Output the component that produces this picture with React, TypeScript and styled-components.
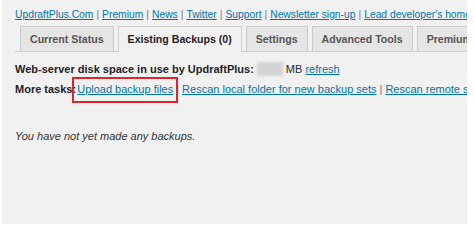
import * as React from "react";
import styled, { createGlobalStyle } from "styled-components";

const GlobalStyle = createGlobalStyle`
  html, body {
    margin: 0;
    padding: 0;
    background: #ffffff;
  }
  body {
    font-family: "Liberation Sans", Arial, sans-serif;
    color: #23282d;
  }
`;

const LIEN = "#0073aa";

const Page = styled.div`
  margin-left: 2px;
  width: 465px;
  height: 224px;
  box-sizing: border-box;
  padding-left: 13px;
  background: #f1f1f1;
  overflow: hidden;
`;

const BarreLiens = styled.div`
  padding-top: 8px;
  font-size: 10.3px;
  line-height: 13px;
  white-space: nowrap;
  color: #666;
`;

const Lien = styled.a`
  color: ${LIEN};
  text-decoration: underline;
  cursor: pointer;
`;

const Separateur = styled.span`
  color: #777;
  margin: 0 3px;
`;

const BarreOnglets = styled.div`
  display: flex;
  gap: 4px;
  margin-top: 5px;
  padding-left: 5px;
  border-bottom: 1px solid #ccc;
  white-space: nowrap;
`;

const Onglet = styled.div<{ $actif?: boolean }>`
  flex: none;
  height: 24px;
  line-height: 25px;
  padding: 0 9px;
  margin-bottom: -1px;
  font-size: 10.6px;
  font-weight: 700;
  border: 1px solid #ccc;
  border-bottom-color: ${(p) => (p.$actif ? "#f1f1f1" : "#ccc")};
  background: ${(p) => (p.$actif ? "#f1f1f1" : "#e5e5e5")};
  color: ${(p) => (p.$actif ? "#1d2327" : "#555")};
`;

const Contenu = styled.div`
  margin-top: 7px;
  font-size: 11px;
  line-height: 20px;
  white-space: nowrap;
`;

const Ligne = styled.div`
  color: #23282d;
`;

const Etiquette = styled.strong`
  font-weight: 700;
  color: #1d2327;
`;

const Flou = styled.span`
  display: inline-block;
  width: 26px;
  height: 14px;
  margin: 0 3px 0 3px;
  vertical-align: -3px;
  background: #d4d4d4;
  filter: blur(1.5px);
`;

const Encadre = styled.span`
  position: relative;
  display: inline-block;
  margin-left: -2px;
  line-height: 20px;
  &::after {
    content: "";
    position: absolute;
    left: -5px;
    right: -5px;
    top: -2px;
    bottom: -4px;
    border: 2px solid #e2232b;
  }
`;

const Vide = styled.div`
  margin-top: 27px;
  font-size: 11px;
  line-height: 20px;
  font-style: italic;
  color: #333;
`;

const liens = [
  "UpdraftPlus.Com",
  "Premium",
  "News",
  "Twitter",
  "Support",
  "Newsletter sign-up",
  "Lead developer's homepage",
];

const onglets = [
  { nom: "Current Status" },
  { nom: "Existing Backups (0)", actif: true },
  { nom: "Settings" },
  { nom: "Advanced Tools" },
  { nom: "Premium / Extensions" },
];

export default function App() {
  return (
    <>
      <GlobalStyle />
      <Page>
        <BarreLiens>
          {liens.map((l, i) => (
            <React.Fragment key={l}>
              {i > 0 && <Separateur>|</Separateur>}
              <Lien>{l}</Lien>
            </React.Fragment>
          ))}
        </BarreLiens>

        <BarreOnglets>
          {onglets.map((o) => (
            <Onglet key={o.nom} $actif={o.actif}>
              {o.nom}
            </Onglet>
          ))}
        </BarreOnglets>

        <Contenu>
          <Ligne>
            <Etiquette>Web-server disk space in use by UpdraftPlus:</Etiquette>
            <Flou />
            MB <Lien>refresh</Lien>
          </Ligne>
          <Ligne>
            <Etiquette>More tasks:</Etiquette>{" "}
            <Encadre>
              <Lien>Upload backup files</Lien>
            </Encadre>
            <Separateur>|</Separateur>
            <Lien>Rescan local folder for new backup sets</Lien>
            <Separateur>|</Separateur>
            <Lien>Rescan remote storage</Lien>
          </Ligne>
        </Contenu>

        <Vide>You have not yet made any backups.</Vide>
      </Page>
    </>
  );
}
